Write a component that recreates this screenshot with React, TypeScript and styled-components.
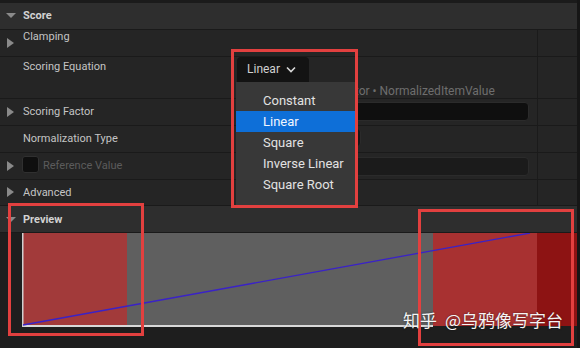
import React from 'react';
import styled, { createGlobalStyle } from 'styled-components';

const GlobalStyle = createGlobalStyle`
  body {
    margin: 0;
    background: #1e1e1e;
    font-family: Roboto, "Noto Sans", sans-serif;
  }
`

const Page = styled.div`
  position: relative;
  width: 580px;
  height: 348px;
  overflow: hidden;
  display: flex;
  background: #1e1e1e;
`

const Main = styled.div`
  flex: 1;
  display: flex;
  flex-direction: column;
`

const ScrollEdge = styled.div`
  width: 3px;
  background: #161616;
`

const TopStrip = styled.div`
  height: 3px;
  background: #1b1b1b;
`

const SectionHeader = styled.div`
  height: 26px;
  display: flex;
  align-items: center;
  background: #2e2e2e;
  border-bottom: 1px solid #1a1a1a;
  color: #d2d2d2;
  font-size: 11px;
  font-weight: 700;
`

const Row = styled.div<{ $h: number }>`
  height: ${p => p.$h}px;
  display: grid;
  grid-template-columns: 232px 305px 1fr;
  background: #252525;
  border-bottom: 1px solid #1a1a1a;
`

const LabelCell = styled.div<{ $pad: number; $dim?: boolean }>`
  position: relative;
  display: flex;
  align-items: flex-start;
  padding-top: ${p => p.$pad}px;
  padding-left: 23px;
  color: ${p => (p.$dim ? '#5c5c5c' : '#c4c4c4')};
  font-size: 11px;
  line-height: 14px;
`

const Expander = styled.span`
  position: absolute;
  left: 7px;
  top: 50%;
  margin-top: -5px;
  width: 0;
  height: 0;
  border-top: 5px solid transparent;
  border-bottom: 5px solid transparent;
  border-left: 7px solid #8a8a8a;
`

const Collapser = styled.span`
  width: 0;
  height: 0;
  margin: 0 7px 0 6px;
  border-left: 5px solid transparent;
  border-right: 5px solid transparent;
  border-top: 5px solid #8a8a8a;
`

const ValueCell = styled.div`
  display: flex;
  flex-direction: column;
  align-items: flex-start;
  padding: 0 8px 0 5px;
`

const ResetCell = styled.div`
  border-left: 1px solid #1b1b1b;
`

const Combo = styled.div`
  height: 25px;
  display: flex;
  align-items: center;
  gap: 6px;
  padding: 0 13px 0 10px;
  background: #131313;
  border-radius: 4px 4px 0 0;
  color: #d0d0d0;
  font-size: 12px;
`

const Hint = styled.div`
  margin-top: 2px;
  align-self: stretch;
  padding-left: 55px;
  color: #6e6e6e;
  font-size: 12px;
  line-height: 14px;
  white-space: nowrap;
`

const Field = styled.div<{ $bg: string; $w: string; $top: number }>`
  margin-top: ${p => p.$top}px;
  width: ${p => p.$w};
  height: 19px;
  background: ${p => p.$bg};
  border: 1px solid #2b2b2b;
  border-radius: 4px;
  box-sizing: border-box;
`

const CheckBox = styled.span`
  position: absolute;
  left: 22px;
  top: 3px;
  width: 17px;
  height: 17px;
  box-sizing: border-box;
  background: #0f0f0f;
  border: 1px solid #303030;
  border-radius: 3px;
`

const CheckLabel = styled.span`
  margin-left: 20px;
`

const ChartArea = styled.div`
  height: 115px;
  padding-left: 22px;
  background: #1e1e1e;
`

const Menu = styled.div`
  position: absolute;
  left: 236px;
  top: 82px;
  width: 120px;
  height: 123px;
  padding-top: 8px;
  box-sizing: border-box;
  background: #383838;
`

const MenuItem = styled.div<{ $active?: boolean }>`
  height: 21px;
  display: flex;
  align-items: center;
  padding-left: 27px;
  font-size: 13px;
  color: ${p => (p.$active ? '#f2f7ff' : '#e2e2e2')};
  background: ${p => (p.$active ? '#0e6fd8' : 'transparent')};
`

const Annotation = styled.div<{ $x: number; $y: number; $w: number; $h: number }>`
  position: absolute;
  left: ${p => p.$x}px;
  top: ${p => p.$y}px;
  width: ${p => p.$w}px;
  height: ${p => p.$h}px;
  box-sizing: border-box;
  border: 3px solid #e2403f;
  pointer-events: none;
`

const Watermark = styled.div`
  position: absolute;
  left: 403px;
  top: 308px;
  color: #f4f4f4;
  font-family: "Noto Sans CJK SC", "Noto Sans", sans-serif;
  font-size: 17px;
  line-height: 24px;
  white-space: nowrap;
  text-shadow: 0 0 2px rgba(0, 0, 0, 0.5);
`

const Gap = styled.span`
  display: inline-block;
  width: 8px;
`

const Chevron = () => (
  <svg width="10" height="7" viewBox="0 0 10 7">
    <path d="M1 1.5 L5 5.5 L9 1.5" fill="none" stroke="#d8d8d8" strokeWidth="1.6" />
  </svg>
)

const Chart = () => (
  <svg width="555" height="94" viewBox="0 0 555 94">
    <rect x="1" y="0" width="514" height="92" fill="#5f5f5f" />
    <rect x="1" y="0" width="104" height="92" fill="#a23a3a" />
    <rect x="1" y="92" width="410" height="2" fill="#d8d8d8" />
    <rect x="411" y="0" width="104" height="93" fill="#a83131" />
    <rect x="515" y="0" width="40" height="93" fill="#8d1313" />
    <rect x="0" y="0" width="1.5" height="94" fill="#cfcfcf" />
    <line x1="1" y1="92" x2="508" y2="0" stroke="#3a22c8" strokeWidth="1.3" />
  </svg>
)

const options = ['Constant', 'Linear', 'Square', 'Inverse Linear', 'Square Root'];

export default function App() {
  return (
    <Page>
      <GlobalStyle />
      <Main>
        <TopStrip />
        <SectionHeader>
          <Collapser />
          Score
        </SectionHeader>
        <Row $h={26}>
          <LabelCell $pad={0}>
            <Expander />
            Clamping
          </LabelCell>
          <ValueCell />
          <ResetCell />
        </Row>
        <Row $h={41}>
          <LabelCell $pad={3}>Scoring Equation</LabelCell>
          <ValueCell>
            <Combo>
              Linear
              <Chevron />
            </Combo>
            <Hint>Scoring Factor • NormalizedItemValue</Hint>
          </ValueCell>
          <ResetCell />
        </Row>
        <Row $h={26}>
          <LabelCell $pad={6}>
            <Expander />
            Scoring Factor
          </LabelCell>
          <ValueCell>
            <Field $bg="#0f0f0f" $w="100%" $top={3} />
          </ValueCell>
          <ResetCell />
        </Row>
        <Row $h={26}>
          <LabelCell $pad={6}>Normalization Type</LabelCell>
          <ValueCell>
            <Field $bg="#151515" $w="124px" $top={2} />
          </ValueCell>
          <ResetCell />
        </Row>
        <Row $h={26}>
          <LabelCell $pad={6} $dim>
            <Expander />
            <CheckBox />
            <CheckLabel>Reference Value</CheckLabel>
          </LabelCell>
          <ValueCell>
            <Field $bg="#1b1b1b" $w="100%" $top={4} />
          </ValueCell>
          <ResetCell />
        </Row>
        <Row $h={26}>
          <LabelCell $pad={6}>
            <Expander />
            Advanced
          </LabelCell>
          <ValueCell />
          <ResetCell />
        </Row>
        <SectionHeader>
          <Collapser />
          Preview
        </SectionHeader>
        <ChartArea>
          <Chart />
        </ChartArea>
      </Main>
      <ScrollEdge />

      <Menu>
        {options.map(o => (
          <MenuItem key={o} $active={o === 'Linear'}>
            {o}
          </MenuItem>
        ))}
      </Menu>

      <Annotation $x={231} $y={49} $w={127} $h={159} />
      <Annotation $x={8} $y={203} $w={136} $h={133} />
      <Annotation $x={418} $y={209} $w={156} $h={137} />
      <Watermark>
        知乎<Gap />@乌鸦像写字台
      </Watermark>
    </Page>
  );
}
